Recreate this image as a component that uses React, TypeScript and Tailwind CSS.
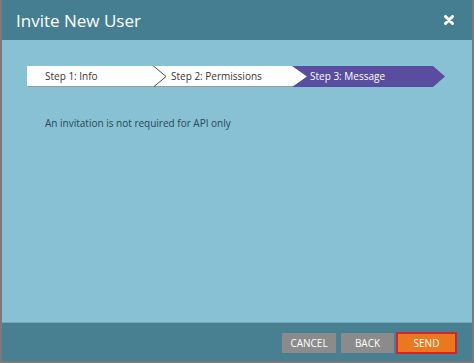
import React from 'react';

const font = { fontFamily: '"Open Sans", "Liberation Sans", sans-serif' };

const StepBar: React.FC = () => {
  return (
    <div className="relative flex h-[21px] mt-[26px] ml-[25px] text-[10px]">
      <div
        className="w-[139px] h-full bg-white border-b border-[#9a9a9a] flex items-center pl-[18px] text-[#333]"
        style={{ clipPath: 'polygon(0 0, 126px 0, 100% 50%, 126px 100%, 0 100%)' }}
      >
        Step 1: Info
      </div>
      <div
        className="ml-[-13px] w-[154px] h-full bg-white border-b border-[#9a9a9a] flex items-center pl-[18px] text-[#333]"
        style={{ clipPath: 'polygon(0 0, 141px 0, 100% 50%, 141px 100%, 0 100%, 13px 50%)' }}
      >
        Step 2: Permissions
      </div>
      <div
        className="ml-[-15px] w-[153px] h-full bg-[#5a4c9f] flex items-center pl-[18px] text-white"
        style={{ clipPath: 'polygon(0 0, 141px 0, 100% 50%, 141px 100%, 0 100%, 15px 50%)' }}
      >
        Step 3: Message
      </div>
      <svg className="absolute left-[126px] top-0" width="14" height="21" viewBox="0 0 14 21">
        <polyline points="0.5,0 13,10.5 0.5,21" fill="none" stroke="#4a4a4a" strokeWidth="1" />
      </svg>
    </div>
  );
};

export default function App() {
  return (
    <div className="w-[474px] h-[363px] bg-[#7a7a7a] px-[2px] pb-[2px] flex flex-col" style={font}>
      <div className="h-[40px] bg-[#467e91] flex items-center justify-between pl-[14px] pr-[18px]">
        <span className="text-white text-[17px] leading-none">Invite New User</span>
        <svg width="10" height="10" viewBox="0 0 10 10">
          <path d="M1.5 1.5 L8.5 8.5 M8.5 1.5 L1.5 8.5" stroke="#fff" strokeWidth="3" strokeLinecap="round" />
        </svg>
      </div>
      <div className="flex-1 bg-[#87c1d3] border-b border-[#6fa9bb]">
        <StepBar />
        <div className="mt-[29px] ml-[43px] text-[10px] text-[#2b4753]">
          An invitation is not required for API only
        </div>
      </div>
      <div className="h-[38px] bg-[#487f91] flex items-center justify-end pr-[15px] pt-[2px] text-[10px] text-white">
        <button className="h-[20px] w-[54px] bg-[#8b8b8b] flex items-center justify-center">CANCEL</button>
        <button className="ml-[5px] h-[20px] w-[53px] bg-[#8b8b8b] flex items-center justify-center">BACK</button>
        <button className="ml-[2px] h-[22px] w-[61px] bg-[#e9781f] border-2 border-[#d4242a] flex items-center justify-center">SEND</button>
      </div>
    </div>
  );
}
